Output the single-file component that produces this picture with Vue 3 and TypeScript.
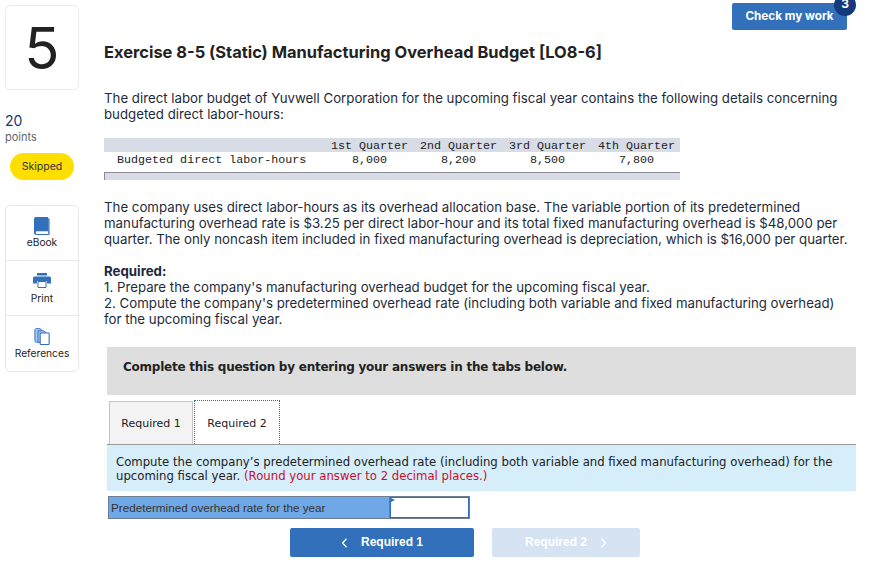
<script setup lang="ts">
const rows = ['1st Quarter', '2nd Quarter', '3rd Quarter', '4th Quarter']
const vals = ['8,000', '8,200', '8,500', '7,800']
</script>

<template>
  <div class="page">
    <aside class="side">
      <div class="num">5</div>
      <div class="pts">20</div>
      <div class="ptl">points</div>
      <div class="pill">Skipped</div>
      <div class="tools">
        <div class="tool book">
          <svg width="16" height="18" viewBox="0 0 18 20"><path d="M2 0H16V16H3.500A1.500 1.500 0 0 0 3.500 19H16V20H3A3 3 0 0 1 0 17V2A2 2 0 0 1 2 0Z" fill="#3370bb"/><path d="M16 1.500H17.500V20H16Z" fill="#3370bb"/></svg>
          <span>eBook</span>
        </div>
        <div class="tool printer">
          <svg width="18" height="15" viewBox="0 0 18 15"><path d="M4 0H14V2.500H4Z" fill="#3370bb"/><path d="M1.500 3.500H16.500A1.500 1.500 0 0 1 18 5V10.500H14V8H4V10.500H0V5A1.500 1.500 0 0 1 1.500 3.500Z" fill="#3370bb"/><path d="M5 8.500H13V14.500H5Z" fill="#fff" stroke="#3370bb"/></svg>
          <span>Print</span>
        </div>
        <div class="tool refs">
          <svg width="16" height="17" viewBox="0 0 17 19" fill="none" stroke="#3370bb"><path d="M6 16H2.500A2 2 0 0 1 .5 14V2.500A2 2 0 0 1 2.500 .5H6L9 3" fill="#a9c4e6"/><path d="M4 3H10L13 5V16H4Z" fill="#a9c4e6"/><path d="M6.500 5.500H15.500A1 1 0 0 1 16.500 6.500V17.500A1 1 0 0 1 15.500 18.500H7.500A1 1 0 0 1 6.500 17.500Z" fill="#fff" stroke-width="1.200"/></svg>
          <span>References</span>
        </div>
      </div>
    </aside>

    <main class="main">
      <div class="bar">
        <div class="check">Check my work<span class="badge">3</span></div>
      </div>
      <h1>Exercise 8-5 (Static) Manufacturing Overhead Budget [LO8-6]</h1>
      <p class="p1">The direct labor budget of Yuvwell Corporation for the upcoming fiscal year contains the following details concerning budgeted direct labor-hours:</p>

      <div class="tbl">
        <div class="trow head">
          <span class="lab"></span>
          <span v-for="r in rows" :key="r" class="cell">{{ r }}</span>
        </div>
        <div class="trow body">
          <span class="lab">Budgeted direct labor-hours</span>
          <span v-for="v in vals" :key="v" class="cell">{{ v }}</span>
        </div>
        <div class="tfoot"></div>
      </div>

      <p class="p2">The company uses direct labor-hours as its overhead allocation base. The variable portion of its predetermined manufacturing overhead rate is $3.25 per direct labor-hour and its total fixed manufacturing overhead is $48,000 per quarter. The only noncash item included in fixed manufacturing overhead is depreciation, which is $16,000 per quarter.</p>

      <div class="req">
        <strong>Required:</strong>
        <div>1. Prepare the company's manufacturing overhead budget for the upcoming fiscal year.</div>
        <div>2. Compute the company's predetermined overhead rate (including both variable and fixed manufacturing overhead) for the upcoming fiscal year.</div>
      </div>

      <section class="work">
        <div class="complete">Complete this question by entering your answers in the tabs below.</div>
        <div class="tabs">
          <div class="tab off">Required 1</div>
          <div class="tab on">Required 2</div>
        </div>
        <div class="info">Compute the company’s predetermined overhead rate (including both variable and fixed manufacturing overhead) for the upcoming fiscal year. <span class="red">(Round your answer to 2 decimal places.)</span></div>
        <div class="answer">
          <div class="alabel">Predetermined overhead rate for the year</div>
          <div class="ainput"></div>
        </div>
        <div class="nav">
          <div class="btn prev"><svg width="7" height="10" viewBox="0 0 7 10" fill="none" stroke="currentColor" stroke-width="1.300"><path d="M5.500 .8L1.500 5L5.500 9.200"/></svg>Required 1</div>
          <div class="btn next">Required 2<svg width="7" height="10" viewBox="0 0 7 10" fill="none" stroke="currentColor" stroke-width="1.300"><path d="M1.500 .8L5.500 5L1.500 9.200"/></svg></div>
        </div>
      </section>
    </main>
  </div>
</template>

<style scoped>
.page { display: flex; width: 883px; height: 571px; overflow: hidden; background: #fff; color: #1e2a3a; font-family: "Inter", "Liberation Sans", sans-serif; box-sizing: border-box; }
.side { width: 79px; margin-left: 5px; padding-top: 5px; flex: none; }
.num { width: 74px; height: 85px; box-sizing: border-box; border: 1px solid #ececec; border-radius: 5px; display: flex; align-items: center; justify-content: center; font: 400 58px/1 "Inter", sans-serif; color: #222; }
.pts { margin-top: 23px; font-size: 14px; line-height: 16px; color: #1c3a6e; }
.ptl { margin-top: 1px; font-size: 11px; line-height: 14px; color: #666; }
.pill { margin: 9px 0 0 5px; width: 64px; height: 27px; border-radius: 14px; background: #ffdf00; font-size: 10.500px; line-height: 27px; text-align: center; color: #333; }
.tools { margin-top: 25px; width: 74px; height: 167px; box-sizing: border-box; border: 1px solid #e8e8e8; border-radius: 5px; display: flex; flex-direction: column; }
.tool { flex: 1; display: flex; flex-direction: column; align-items: center; font-size: 10.200px; line-height: 12px; color: #222; border-bottom: 1px solid #e8e8e8; box-sizing: border-box; height: 55px; }
.tool:last-child { border-bottom: 0; }
.tool svg { flex: none; }
.book { padding-top: 11px; gap: 1px; }
.printer { padding-top: 12px; gap: 4px; }
.refs { padding-top: 12px; gap: 2px; }
.main { margin-left: 20px; width: 752px; flex: none; }
.bar { display: flex; justify-content: flex-end; padding: 3px 9px 0 0; }
.check { position: relative; width: 115px; height: 27px; background: #3370bb; border-radius: 2px; color: #fff; font-size: 11.700px; font-weight: 700; line-height: 27px; text-align: center; }
.badge { position: absolute; right: -9px; top: -9px; width: 22px; height: 22px; border-radius: 50%; background: #133a7c; color: #fff; font-size: 12px; line-height: 20px; text-align: center; }
h1 { margin: 12px 0 0; font-size: 16.450px; line-height: 20px; font-weight: 700; color: #222; }
.p1, .p2 { margin: 0; font-size: 13.250px; line-height: 16px; width: 750px; color: #1e2a3a; }
.p1 { margin-top: 28px; }
.tbl { margin-top: 16px; width: 576px; font: 11.700px/17px "Liberation Mono", monospace; color: #222; }
.trow { display: flex; }
.head { height: 14px; background: #d8dce6; }
.body { height: 20px; }
.lab { width: 221px; padding-left: 13px; box-sizing: border-box; flex: none; }
.cell { width: 89px; text-align: center; flex: none; }
.tfoot { height: 7px; background: #d8dce6; border-top: 1px solid #8c8c94; border-left: 1px solid #8c8c94; }
.p2 { margin-top: 19px; }
.req { margin-top: 16px; font-size: 13.250px; line-height: 16px; width: 750px; }
.req strong { font-weight: 700; display: block; }
.work { margin: 20px 0 0 3px; }
.complete { height: 48px; background: #dedede; padding-left: 16px; font: 700 12px/40px "DejaVu Sans", sans-serif; letter-spacing: -.24px; box-sizing: border-box; color: #222; width: 749px; }
.tabs { display: flex; margin-top: 5px; padding-left: 2px; gap: 1px; height: 44px; }
.tab { box-sizing: border-box; font: 11px/46px "DejaVu Sans", sans-serif; text-align: center; color: #222; }
.off { width: 84px; background: #f3f3f3; border: 1px solid #c4c4c4; border-bottom: 0; margin-top: 1px; line-height: 44px; }
.on { width: 86px; background: #fff; border: 1px dotted #2f6db5; border-bottom: 0; }
.info { width: 749px; height: 47px; box-sizing: border-box; background: #d6edfa; border-top: 1px solid #9a9a9a; padding: 10px 9px 0; font: 11.700px/14px "DejaVu Sans", sans-serif; color: #222; }
.red { color: #c8102e; }
.answer { display: flex; margin: 5px 0 0 1px; width: 362px; height: 23px; box-sizing: border-box; border: 1px solid #6d7d92; }
.alabel { width: 281px; background: #6fa8e6; border-right: 1px solid #6d7d92; font: 11.700px/21px "Liberation Sans", sans-serif; padding-left: 2px; box-sizing: border-box; color: #333; }
.ainput { flex: 1; position: relative; background: #fff; border: 1px solid #3370bb; }
.ainput::before { content: ""; position: absolute; left: 0; top: 0; border-left: 4px solid #3370bb; border-top: 2.500px solid transparent; border-bottom: 2.500px solid transparent; }
.nav { display: flex; gap: 18px; margin: 9px 0 0 183px; }
.btn { display: flex; align-items: center; justify-content: center; height: 29px; border-radius: 2px; color: #fff; font: 700 12px/29px "Liberation Sans", sans-serif; gap: 13px; }
.prev { width: 184px; background: #3370bb; }
.next { width: 148px; background: #d6e3f3; }
</style>
